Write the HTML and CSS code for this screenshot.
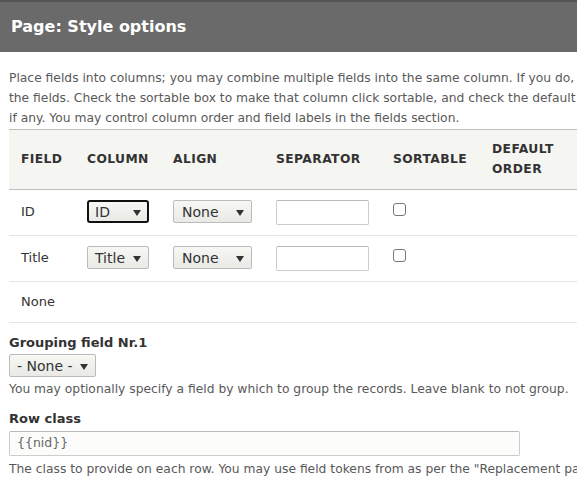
FILE: index.html
```html
<!DOCTYPE html>
<html>
<head>
<meta charset="utf-8">
<link rel="stylesheet" href="styles.css">
</head>
<body>
<div class="backdrop-strip"></div>
<header class="dialog-title">Page: Style options</header>
<main class="dialog-body">
  <p class="intro">Place fields into columns; you may combine multiple fields into the same column. If you do, the separator in the column specified will be used to separate<br>the fields. Check the sortable box to make that column click sortable, and check the default sort radio to determine which column will be sorted by default,<br>if any. You may control column order and field labels in the fields section.</p>
  <table class="fields-table">
    <colgroup>
      <col class="c-field"><col class="c-column"><col class="c-align"><col class="c-sep"><col class="c-sort"><col class="c-default">
    </colgroup>
    <thead>
      <tr>
        <th>Field</th><th>Column</th><th>Align</th><th>Separator</th><th>Sortable</th><th>Default order</th>
      </tr>
    </thead>
    <tbody>
      <tr>
        <td>ID</td>
        <td><span class="select sel-col focused"><span>ID</span><span class="arrow"></span></span></td>
        <td><span class="select sel-align"><span>None</span><span class="arrow"></span></span></td>
        <td><span class="text-input sep-input"></span></td>
        <td><span class="checkbox"></span></td>
        <td></td>
      </tr>
      <tr>
        <td>Title</td>
        <td><span class="select sel-col"><span>Title</span><span class="arrow"></span></span></td>
        <td><span class="select sel-align"><span>None</span><span class="arrow"></span></span></td>
        <td><span class="text-input sep-input"></span></td>
        <td><span class="checkbox"></span></td>
        <td></td>
      </tr>
      <tr class="short">
        <td>None</td><td></td><td></td><td></td><td></td><td></td>
      </tr>
    </tbody>
  </table>

  <div class="form-item first">
    <label class="label">Grouping field Nr.1</label>
    <span class="select sel-group"><span>- None -</span><span class="arrow"></span></span>
    <div class="description">You may optionally specify a field by which to group the records. Leave blank to not group.</div>
  </div>

  <div class="form-item">
    <label class="label">Row class</label>
    <span class="text-input row-input">{{nid}}</span>
    <div class="description">The class to provide on each row. You may use field tokens from as per the "Replacement patterns" used in "Rewrite the output of this field" for all fields.</div>
  </div>
</main>
</body>
</html>
```

FILE: styles.css
```css
html, body {
  margin: 0;
  padding: 0;
  overflow: hidden;
  background: #fff;
}
body {
  font-family: "DejaVu Sans", "Liberation Sans", sans-serif;
  color: #333;
  width: 577px;
  height: 483px;
}
.backdrop-strip {
  height: 2px;
  background: #555;
}
.dialog-title {
  height: 50px;
  background: #6a6a6a;
  color: #fff;
  font-weight: bold;
  font-size: 16px;
  line-height: 50px;
  padding-left: 11px;
  white-space: nowrap;
}
.dialog-body {
  padding: 0 0 0 9px;
  width: 1000px;
}
.intro {
  margin: 16px 0 0 0;
  font-size: 12.3px;
  line-height: 20px;
  color: #595959;
  white-space: nowrap;
  height: 61px;
}
.fields-table {
  margin-top: 0;
  border-collapse: collapse;
  table-layout: fixed;
  width: 578px;
  font-size: 12.5px;
}
.c-field { width: 78px; }
.c-column { width: 86px; }
.c-align { width: 103px; }
.c-sep { width: 117px; }
.c-sort { width: 99px; }
.c-default { width: 95px; }
.fields-table thead tr {
  background: #f5f5f2;
  border-top: 1px solid #bfbfba;
  border-bottom: 1px solid #bfbfba;
}
.fields-table th {
  text-align: left;
  text-transform: uppercase;
  font-size: 12.3px;
  font-weight: bold;
  color: #333;
  line-height: 20px;
  padding: 9px 12px 10px 12px;
  vertical-align: middle;
  letter-spacing: 0.4px;
}
.fields-table th:not(:first-child) { padding-left: 0; }
.fields-table td {
  padding: 10px 12px 10px 12px;
  line-height: 20px;
  vertical-align: top;
  height: 25px;
  font-size: 13px;
}
.fields-table td:not(:first-child) { padding-left: 0; }
.fields-table td:first-child { padding-top: 12px; height: 23px; }
.fields-table tbody tr { border-bottom: 1px solid #e4e4e0; }
.fields-table tr.short td { height: 20px; padding-top: 10px; padding-bottom: 10px; }

.select {
  box-sizing: border-box;
  display: inline-flex;
  align-items: center;
  justify-content: space-between;
  height: 23px;
  padding: 0 7px 0 7px;
  border: 1px solid #bbb;
  border-radius: 2px;
  background: linear-gradient(#f7f7f4, #e9e9e6);
  font-size: 14px;
  color: #333;
  vertical-align: top;
  margin-top: 0;
}
.select.focused {
  border: 2px solid #111;
  border-radius: 3px;
  padding: 0 6px 0 6px;
}
.arrow {
  width: 0;
  height: 0;
  border-left: 4px solid transparent;
  border-right: 4px solid transparent;
  border-top: 6px solid #333;
  margin-top: 2px;
}
.sel-col { width: 62px; }
.sel-align { width: 79px; padding-left: 8px; }
.sel-group { width: 87px; margin-top: 3px; }

.text-input {
  box-sizing: border-box;
  display: inline-block;
  border: 1px solid #ccc;
  border-top-color: #b8b8b8;
  border-radius: 2px;
  background: #fff;
  vertical-align: top;
}
.sep-input { width: 93px; height: 25px; }

.checkbox {
  box-sizing: border-box;
  display: inline-block;
  width: 13px;
  height: 13px;
  border: 1px solid #777;
  border-radius: 3px;
  background: #fff;
  margin-top: 3px;
}

.form-item { margin-top: 14px; }
.form-item.first { margin-top: 12px; }
.label {
  display: block;
  font-size: 13px;
  font-weight: bold;
  line-height: 16px;
  color: #333;
}
.description {
  font-size: 12.3px;
  line-height: 16px;
  color: #595959;
  margin-top: 4px;
  white-space: nowrap;
}
.row-input {
  width: 511px;
  height: 25px;
  margin-top: 4px;
  padding: 0 7px;
  font-size: 12.5px;
  line-height: 22px;
  color: #666;
  background: #fcfcfa;
  display: block;
}
.form-item:last-child .description { margin-top: 5px; }
```
